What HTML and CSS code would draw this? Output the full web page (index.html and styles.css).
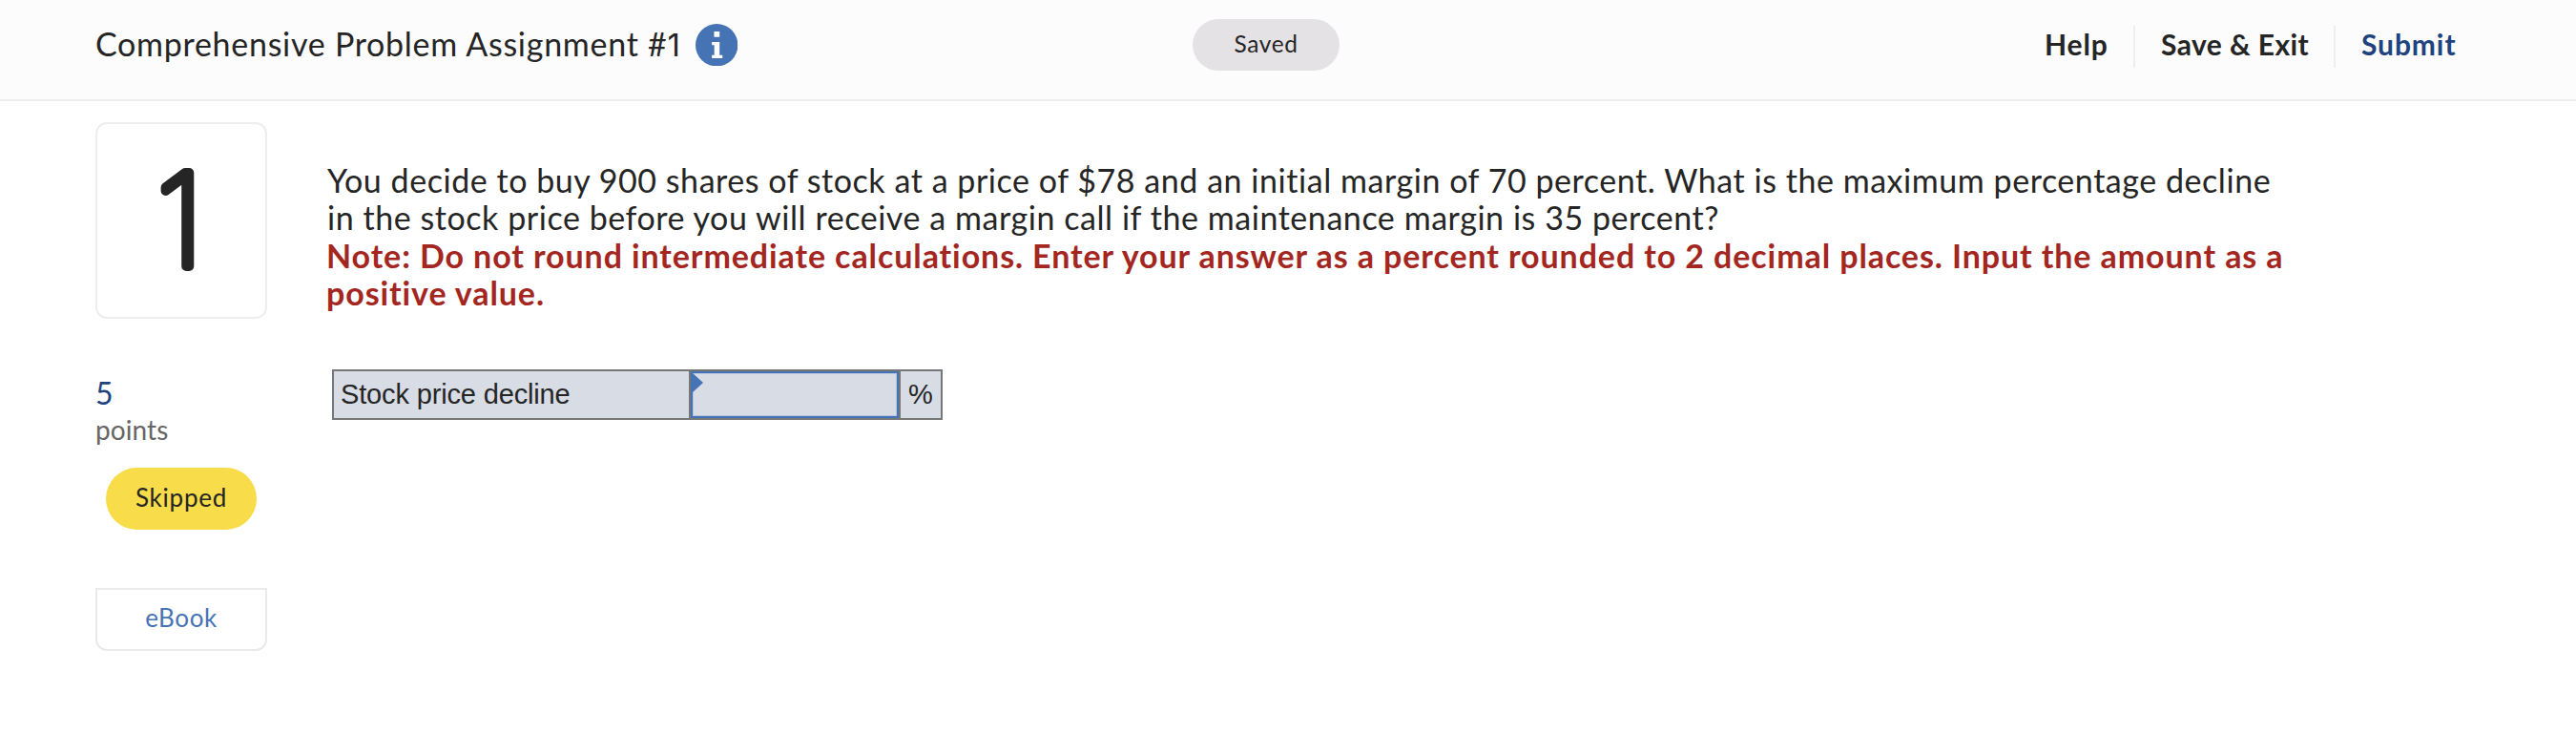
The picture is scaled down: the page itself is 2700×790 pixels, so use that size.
FILE: index.html
```
<!DOCTYPE html>
<html lang="en">
<head>
<meta charset="utf-8">
<title>Comprehensive Problem Assignment #1</title>
<link rel="stylesheet" href="styles.css">
</head>
<body>
<header class="topbar">
  <div class="heading">
    <h1 class="title">Comprehensive Problem Assignment #<span class="digit">1</span></h1>
    <svg class="info" viewBox="0 0 44 44" role="img" aria-label="Information">
      <circle cx="22" cy="22" r="22" fill="#4673b4"/>
      <path d="M19.3 8h5.7v5.7h-5.7zM17 18.8h8v13.7h3v3.3H17v-3.3h2.5V22H17z" fill="#fff"/>
    </svg>
  </div>
  <div class="saved">Saved</div>
  <nav class="actions">
    <a class="action help">Help</a>
    <a class="action exit">Save &amp; Exit</a>
    <a class="action submit">Submit</a>
  </nav>
</header>
<main class="page">
  <aside class="side">
    <div class="number">
      <svg class="numeral" viewBox="0 0 176 202"><text x="62" y="149">1</text></svg>
    </div>
    <div class="score">5</div>
    <div class="points">points</div>
    <div class="skipped">Skipped</div>
    <a class="ebook">eBook</a>
  </aside>
  <section class="question">
    <p class="prompt">
      <span class="line first">You decide to buy 900 shares of stock at a price of $78 and an initial margin of 70 percent. What is the maximum percentage decline</span>
      <span class="line second">in the stock price before you will receive a margin call if the maintenance margin is 35 percent?</span>
      <strong class="line note">Note: Do not round intermediate calculations. Enter your answer as a percent rounded to 2 decimal places. Input the amount as a</strong>
      <strong class="line note">positive value.</strong>
    </p>
    <div class="answer">
      <div class="label">Stock price decline</div>
      <div class="field"><svg class="marker" viewBox="0 0 11 20"><path d="M0 0L11 10 0 20z" fill="#4673b4"/></svg></div>
      <div class="unit">%</div>
    </div>
  </section>
</main>
</body>
</html>
```
FILE: styles.css
```
* { box-sizing: border-box; }
body {
  margin: 0;
  background: #fff;
  color: #252525;
  font-family: Lato, "Open Sans", sans-serif;
}
.topbar {
  display: grid;
  grid-template-columns: 1150px 154px 1fr;
  height: 106px;
  padding: 20px 0 0 100px;
  background: #fcfcfc;
  border-bottom: 2px solid #eee;
}
.heading { display: flex; align-items: flex-start; height: 54px; }
.title {
  width: 628.8px;
  margin: 0;
  font-size: 34px;
  font-weight: 400;
  line-height: 52px;
  letter-spacing: .72px;
  white-space: nowrap;
}
.digit { font-family: Inter, sans-serif; font-size: 33px; }
.info { width: 44.4px; height: 44.4px; margin-top: 4.7px; }
.saved {
  height: 54px;
  border-radius: 27px;
  background: #e4e2e5;
  font-size: 24.5px;
  line-height: 51px;
  letter-spacing: .6px;
  text-align: center;
}
.actions { display: flex; padding: 7px 126px 0 0; justify-content: flex-end; height: 51px; }
.action {
  height: 44px;
  font-size: 30px;
  font-weight: 700;
  line-height: 38px;
  white-space: nowrap;
}
.help { width: 95px; border-right: 2px solid #eee; letter-spacing: .9px; }
.exit { width: 210px; padding-left: 27px; border-right: 2px solid #eee; letter-spacing: .42px; }
.submit { width: 126px; padding-left: 27px; letter-spacing: .9px; color: #20437e; }

.page { display: grid; grid-template-columns: 180px 2100px; column-gap: 63px; padding: 22px 0 0 100px; }
.side { display: flex; flex-direction: column; }
.number { height: 206px; border: 2px solid #eee; border-radius: 12px; }
.numeral { display: block; width: 176px; height: 202px; }
.numeral text {
  font-family: Inter, sans-serif;
  font-size: 135px;
  font-weight: 100;
  fill: #252525;
  stroke: #252525;
  stroke-width: 10px;
  stroke-linejoin: round;
}
.score { margin-top: 59px; font-size: 32px; line-height: 38px; color: #20437e; }
.points { margin-top: 1px; font-size: 28px; line-height: 36px; letter-spacing: .1px; color: #666; }
.skipped {
  width: 158px;
  height: 65px;
  margin: 22px 0 0 11px;
  border-radius: 33px;
  background: #f8dc49;
  font-size: 26px;
  line-height: 63px;
  letter-spacing: .75px;
  text-align: center;
}
.ebook {
  height: 66px;
  margin-top: 61px;
  border: 2px solid #eaeaea;
  border-radius: 0 0 12px 12px;
  color: #4673b4;
  font-size: 26px;
  line-height: 58px;
  letter-spacing: .6px;
  text-align: center;
}
.question { padding-top: 41px; }
.prompt { margin: 0; font-size: 34px; line-height: 39.33px; }
.line { display: block; white-space: nowrap; }
.first { letter-spacing: .545px; }
.second { letter-spacing: .555px; }
.note { margin-left: -1px; font-weight: 700; letter-spacing: .9px; color: #a3261f; }
.answer {
  display: grid;
  grid-template-columns: 372px 218px 42px;
  column-gap: 2px;
  width: 640px;
  height: 53px;
  margin: 60.7px 0 0 5px;
  border: 2px solid #777;
  background: #777;
  font-family: "Liberation Sans", Arial, sans-serif;
  font-size: 29px;
  line-height: 49px;
}
.label { padding-left: 7px; background: #d8dce5; letter-spacing: -.15px; color: #252525; }
.field {
  border: 2px solid #4673b4;
  background: #d8dce5;
  box-shadow: inset 0 0 0 1px #b9c8e0;
}
.marker { display: block; width: 11px; height: 20px; }
.unit { padding-left: 8px; background: #d8dce5; }
```
